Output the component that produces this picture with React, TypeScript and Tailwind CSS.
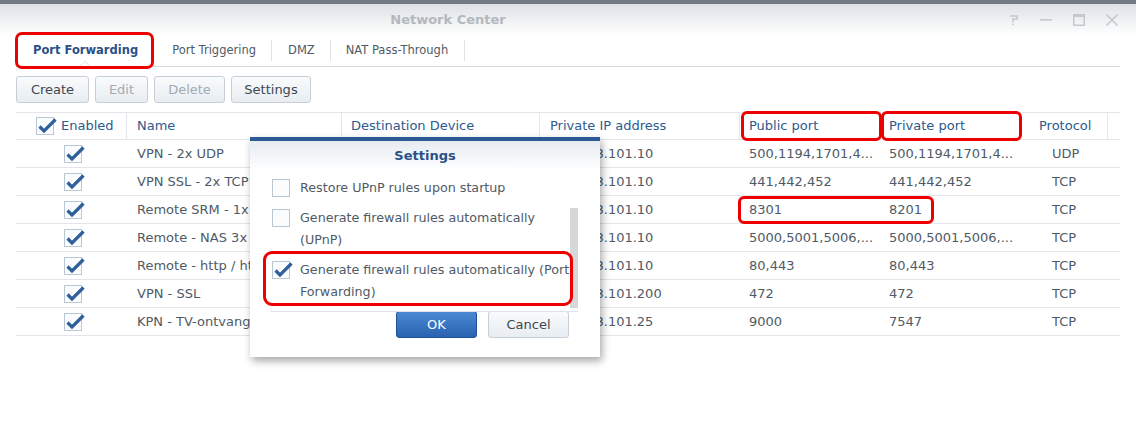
import React from "react";

const font = { fontFamily: '"DejaVu Sans", Verdana, sans-serif' };

function Check({ checked, size = 18 }: { checked: boolean; size?: number }) {
  return (
    <svg width={size + 4} height={size + 2} viewBox="0 0 22 20" className="block overflow-visible">
      <rect x="0.5" y="1.5" width="17" height="17" fill="#fbfcfd" stroke="#b9c6d4" />
      {checked && (
        <path d="M3.5 10.5 L8 15 L19.5 3.5" fill="none" stroke="#2f5f9c" strokeWidth="3.2" strokeLinecap="butt" strokeLinejoin="miter" />
      )}
    </svg>
  );
}

const rows = [
  ["VPN - 2x UDP", ".101.10", "500,1194,1701,4...", "500,1194,1701,4...", "UDP"],
  ["VPN SSL - 2x TCP", ".101.10", "441,442,452", "441,442,452", "TCP"],
  ["Remote SRM - 1x", ".101.10", "8301", "8201", "TCP"],
  ["Remote - NAS 3x", ".101.10", "5000,5001,5006,...", "5000,5001,5006,...", "TCP"],
  ["Remote - http / https", ".101.10", "80,443", "80,443", "TCP"],
  ["VPN - SSL", ".101.200", "472", "472", "TCP"],
  ["KPN - TV-ontvanger", ".101.25", "9000", "7547", "TCP"],
];

const cols = "grid grid-cols-[111px_215px_198px_200px_140px_150px_78px_12px]";

export default function App() {
  return (
    <div className="relative w-[1136px] h-[428px] overflow-hidden bg-white text-[12px]" style={font}>
      <div className="h-[4px] bg-[#717983]" />
      <div className="relative h-[31px] bg-gradient-to-b from-[#dde1e6] to-[#ffffff] flex items-center justify-center">
        <span className="font-bold text-[13px] text-[#b3b8bf] ml-[-240px]">Network Center</span>
        <div className="absolute right-[18px] top-[10px] flex items-center gap-[21px] text-[#c4c8cd]">
          <svg width="10" height="12" viewBox="0 0 10 12">
            <path d="M1 2 H8 V5 H4 V8" fill="none" stroke="#c4c8cd" strokeWidth="1.6" />
            <rect x="3.2" y="9.6" width="1.6" height="1.6" fill="#c4c8cd" />
          </svg>
          <svg width="12" height="12" viewBox="0 0 12 12">
            <rect x="0" y="5" width="12" height="1.6" fill="#c4c8cd" />
          </svg>
          <svg width="12" height="12" viewBox="0 0 12 12">
            <rect x="0.75" y="0.75" width="10.5" height="10.5" fill="none" stroke="#c4c8cd" strokeWidth="1.5" />
            <rect x="0" y="0" width="12" height="3" fill="#c4c8cd" />
          </svg>
          <svg width="12" height="12" viewBox="0 0 12 12">
            <path d="M0.5 0.5 L11.5 11.5 M11.5 0.5 L0.5 11.5" stroke="#c4c8cd" strokeWidth="1.5" />
          </svg>
        </div>
      </div>

      {/* Tabs */}
      <div className="ml-[16px] mr-[16px] h-[32px] border-b border-[#d6dade] flex items-stretch text-[11.5px]">
        <div className="relative flex items-center px-[17px] font-bold text-[#2b5087]">
          Port Forwarding
          <div className="absolute left-[63px] bottom-[-1px] w-0 h-0 border-l-[6px] border-r-[6px] border-b-[6px] border-l-transparent border-r-transparent border-b-[#d6dade]" />
          <div className="absolute left-[64px] bottom-[-1px] w-0 h-0 border-l-[5px] border-r-[5px] border-b-[5px] border-l-transparent border-r-transparent border-b-white" />
        </div>
        <div className="flex items-center pl-[17px] pr-[15px] text-[#505a64] border-r border-[#dfe3e7] my-[5px]">Port Triggering</div>
        <div className="flex items-center pl-[16px] pr-[15px] text-[#505a64] border-r border-[#dfe3e7] my-[5px]">DMZ</div>
        <div className="flex items-center pl-[15px] pr-[16px] text-[#505a64] border-r border-[#dfe3e7] my-[5px]">NAT Pass-Through</div>
      </div>

      {/* Toolbar */}
      <div className="ml-[16px] mt-[9px] flex gap-[6px] text-[13px]">
        {[
          ["Create", 73, false],
          ["Edit", 53, true],
          ["Delete", 71, true],
          ["Settings", 80, false],
        ].map(([t, w, d]) => (
          <div
            key={t as string}
            style={{ width: w as number }}
            className={`h-[27px] rounded-[3px] border border-[#c7ced7] bg-gradient-to-b from-[#f9fbfc] to-[#e8edf2] flex items-center justify-center ${d ? "text-[#a4abb3]" : "text-[#3d4650]"}`}
          >
            {t}
          </div>
        ))}
      </div>

      {/* Table */}
      <div className="ml-[16px] mr-[16px] mt-[9px] border-t border-[#e2e6ea]">
        <div className={`${cols} h-[27px] border-b border-[#e2e6ea] text-[#2c5a8e] text-[13px]`}>
          <div className="flex items-center pl-[20px] gap-[3px] border-r border-[#e4e8ee]">
            <Check checked />
            <span>Enabled</span>
          </div>
          <div className="flex items-center pl-[10px] border-r border-[#e4e8ee]">Name</div>
          <div className="flex items-center pl-[9px] border-r border-[#e4e8ee]">Destination Device</div>
          <div className="flex items-center pl-[10px] border-r border-[#e4e8ee]">Private IP address</div>
          <div className="flex items-center pl-[9px]">Public port</div>
          <div className="flex items-center pl-[9px]">Private port</div>
          <div className="flex items-center pl-[9px] border-r border-[#e4e8ee]">Protocol</div>
          <div />
        </div>
        {rows.map((r, i) => (
          <div key={i} className={`${cols} h-[28px] border-b border-[#e2e6ea] text-[#4f5a66] text-[13px]`}>
            <div className="flex items-center pl-[48px]">
              <Check checked />
            </div>
            <div className="flex items-center pl-[10px] whitespace-nowrap overflow-hidden">{r[0]}</div>
            <div className="flex items-center pl-[9px]" />
            <div className="flex items-center pl-[10px] whitespace-nowrap">{"192.168" + r[1]}</div>
            <div className="flex items-center pl-[9px] whitespace-nowrap">{r[2]}</div>
            <div className="flex items-center pl-[9px] whitespace-nowrap">{r[3]}</div>
            <div className="flex items-center pl-[22px]">{r[4]}</div>
            <div />
          </div>
        ))}
      </div>

      {/* Annotation boxes */}
      <div className="absolute left-[15px] top-[32px] w-[139px] h-[37px] border-[3px] border-[#ee0000] rounded-[7px]" />
      <div className="absolute left-[741px] top-[111px] w-[141px] h-[30px] border-[3px] border-[#ee0000] rounded-[6px]" />
      <div className="absolute left-[881px] top-[111px] w-[141px] h-[30px] border-[3px] border-[#ee0000] rounded-[6px]" />
      <div className="absolute left-[738px] top-[196px] w-[196px] h-[28px] border-[3px] border-[#ee0000] rounded-[6px]" />

      {/* Dialog */}
      <div className="absolute left-[250px] top-[137px] w-[350px] h-[220px] bg-white border-t-[4px] border-[#2c5a92] shadow-[2px_4px_8px_rgba(0,0,0,0.35)] flex flex-col">
        <div className="h-[30px] bg-gradient-to-b from-[#e6ebf1] to-[#ffffff] flex items-center justify-center font-bold text-[13px] text-[#2b5087]">
          Settings
        </div>
        <div className="relative flex-1 pl-[22px] pr-[10px] text-[12.7px] text-[#4f5a66] whitespace-nowrap">
          <div className="flex items-start gap-[6px] mt-[7px]">
            <Check checked={false} />
            <span className="leading-[18px] mt-[1px]">Restore UPnP rules upon startup</span>
          </div>
          <div className="flex items-start gap-[6px] mt-[10px]">
            <Check checked={false} />
            <span className="leading-[22px] -mt-[1px]">
              Generate firewall rules automatically
              <br />
              (UPnP)
            </span>
          </div>
          <div className="flex items-start gap-[6px] mt-[9px]">
            <Check checked />
            <span className="leading-[22px] -mt-[1px]">
              Generate firewall rules automatically (Port
              <br />
              Forwarding)
            </span>
          </div>
          <div className="absolute left-[320px] top-[37px] w-[8px] h-[100px] bg-[#d5d7d9]" />
          <div className="absolute left-[13px] top-[80px] w-[310px] h-[55px] border-[3px] border-[#ee0000] rounded-[9px]" />
          <div className="absolute left-[20px] w-[308px] top-[140px] border-t border-[#dfe3e7]" />
        </div>
        <div className="h-[46px] flex justify-end gap-[11px] pr-[31px] text-[13px]">
          <div className="w-[81px] h-[27px] rounded-[3px] border border-[#1f5398] bg-gradient-to-b from-[#4a8ad4] to-[#2962b0] text-white flex items-center justify-center">
            OK
          </div>
          <div className="w-[81px] h-[27px] rounded-[3px] border border-[#c7ced7] bg-gradient-to-b from-[#f9fbfc] to-[#e8edf2] text-[#3d4650] flex items-center justify-center">
            Cancel
          </div>
        </div>
      </div>
    </div>
  );
}
